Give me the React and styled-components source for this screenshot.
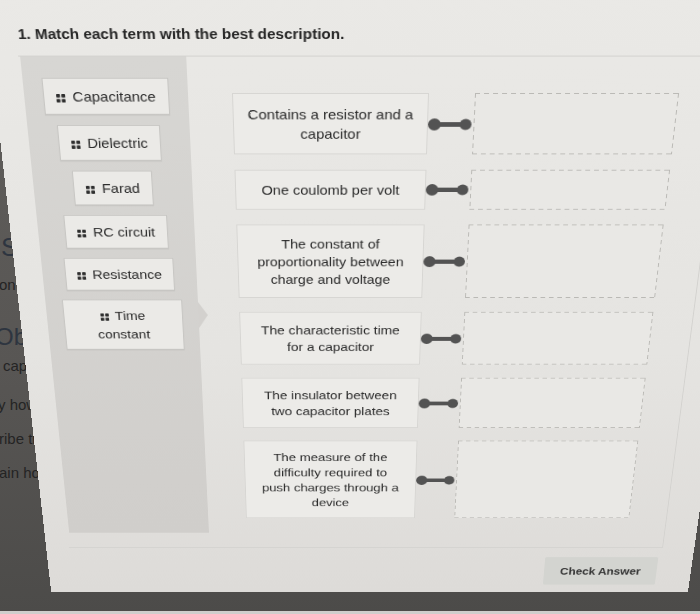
import React from "react";
import styled, { createGlobalStyle } from "styled-components";

const GlobalStyle = createGlobalStyle`
  html, body { margin: 0; padding: 0; background: #575553; overflow: hidden; }
  body { font-family: "Liberation Sans", Arial, Helvetica, sans-serif; }
  #root { width: 700px; height: 614px; }
`;

const Screen = styled.div`
  position: relative;
  width: 700px;
  height: 614px;
  overflow: hidden;
  display: flex;
  flex-direction: column;
  background: linear-gradient(180deg, #615f5c 0%, #585654 60%, #4c4b49 100%);
`;

const BehindPage = styled.div`
  flex: 1;
  display: flex;
  flex-direction: column;
  align-items: flex-start;
`;

const Fragment = styled.div`
  margin-top: ${(p) => p.$top}px;
  margin-left: ${(p) => p.$shift || 0}px;
  font-size: ${(p) => p.$size}px;
  line-height: ${(p) => p.$lh}px;
  color: ${(p) => (p.$heading ? "#2e3540" : "#242424")};
  white-space: nowrap;
`;

const Bezel = styled.div`
  height: 3px;
  background: #cfcecc;
`;

const Panel = styled.section`
  position: absolute;
  left: -5px;
  top: -20px;
  z-index: 1;
  width: 765px;
  box-sizing: border-box;
  padding: 42px 37px 11px 27px;
  background: linear-gradient(180deg, #eae9e6 0%, #e5e4e1 55%, #dddbd8 100%);
  transform-origin: 335px 114px;
  transform: perspective(1000px) rotateX(-18.6deg);
`;

const Title = styled.h1`
  margin: 0 0 12px 2px;
  font-size: 15px;
  line-height: 20px;
  font-weight: 700;
  color: #262626;
`;

const Question = styled.div`
  display: flex;
  border: 1px solid #d3d2cf;
  border-left: none;
  padding-bottom: 21px;
`;

const Pool = styled.div`
  position: relative;
  flex: none;
  width: 164px;
  margin-left: 2px;
  box-sizing: border-box;
  padding-top: 22px;
  display: flex;
  flex-direction: column;
  align-items: center;
  gap: 11px;
  background: linear-gradient(180deg, #d7d6d3 0%, #d0cecb 100%);

  &::after {
    content: "";
    position: absolute;
    top: 50%;
    right: -10px;
    margin-top: -16px;
    border-left: 10px solid #d3d1ce;
    border-top: 16px solid transparent;
    border-bottom: 16px solid transparent;
  }
`;

const Chip = styled.div`
  max-width: 129px;
  box-sizing: border-box;
  padding: 7px 12px;
  border: 1px solid #c8c7c4;
  background: #ebeae7;
  box-shadow: 0 1px 1px rgba(0, 0, 0, 0.06);
  font-size: 15px;
  line-height: 23px;
  color: #2b2b2b;
  text-align: center;
`;

const Handle = styled.svg`
  display: inline-block;
  width: 9px;
  height: 9px;
  margin-right: 7px;
  vertical-align: -0.5px;
`;

const Matches = styled.div`
  margin-left: 44px;
  padding: 38px 0 21px;
  display: flex;
  flex-direction: column;
  gap: 17px;
`;

const Row = styled.div`
  display: flex;
  align-items: stretch;
`;

const Description = styled.div`
  flex: none;
  width: 197px;
  box-sizing: border-box;
  padding: 11px 8px;
  border: 1px solid #d7d6d3;
  background: #ecebe8;
  display: flex;
  flex-direction: column;
  justify-content: center;
  align-items: center;
  font-size: 15px;
  line-height: 21px;
  color: #2b2b2b;
  text-align: center;
`;

const Line = styled.span`
  white-space: nowrap;
`;

const Link = styled.div`
  flex: none;
  width: 46px;
  display: flex;
  align-items: center;
`;

const DropZone = styled.div`
  flex: none;
  width: 204px;
  box-sizing: border-box;
  background:
    linear-gradient(to right, #bab9b5 55%, transparent 0) top left / 9px 1px repeat-x,
    linear-gradient(to right, #bab9b5 55%, transparent 0) bottom left / 9px 1px repeat-x,
    linear-gradient(to bottom, #bab9b5 55%, transparent 0) top left / 1px 9px repeat-y,
    linear-gradient(to bottom, #bab9b5 55%, transparent 0) top right / 1px 9px repeat-y,
    #e9e8e5;
`;

const Footer = styled.div`
  display: flex;
  justify-content: flex-end;
  padding: 14px 4px 0 0;
`;

const CheckButton = styled.button`
  height: 41px;
  padding: 0 19px;
  border: none;
  border-radius: 2px;
  background: #d3d4d0;
  color: #343434;
  font-family: "Liberation Sans", Arial, Helvetica, sans-serif;
  font-size: 14px;
  font-weight: 700;
  cursor: pointer;
`;

const terms = ["Capacitance", "Dielectric", "Farad", "RC circuit", "Resistance", "Time constant"];

const descriptions = [
  ["Contains a resistor and a", "capacitor"],
  ["One coulomb per volt"],
  ["The constant of", "proportionality between", "charge and voltage"],
  ["The characteristic time", "for a capacitor"],
  ["The insulator between", "two capacitor plates"],
  ["The measure of the", "difficulty required to", "push charges through a", "device"],
];

const fragments = [
  { text: "Se", size: 26, lh: 30, top: 232, heading: true, shift: 1 },
  { text: "on", size: 15, lh: 18, top: 14, shift: -1 },
  { text: "Obje", size: 24, lh: 28, top: 29, heading: true, shift: -5 },
  { text: "capa", size: 15, lh: 18, top: 6, shift: 3 },
  { text: "y how", size: 15, lh: 18, top: 21, shift: -2 },
  { text: "ribe the", size: 15, lh: 18, top: 16, shift: -1 },
  { text: "ain how", size: 15, lh: 18, top: 16, shift: -1 },
];

function DragHandle() {
  return (
    <Handle viewBox="0 0 9 9" aria-hidden="true">
      <rect x="0" y="0" width="3.8" height="3.8" rx="0.8" fill="#2e2e2e" />
      <rect x="5.2" y="0" width="3.8" height="3.8" rx="0.8" fill="#2e2e2e" />
      <rect x="0" y="5.2" width="3.8" height="3.8" rx="0.8" fill="#2e2e2e" />
      <rect x="5.2" y="5.2" width="3.8" height="3.8" rx="0.8" fill="#2e2e2e" />
    </Handle>
  );
}

function Connector() {
  return (
    <svg width="44" height="13" viewBox="0 0 44 13" aria-hidden="true">
      <rect x="6" y="4" width="32" height="5" fill="#535353" />
      <circle cx="6.5" cy="6.5" r="6.5" fill="#535353" />
      <circle cx="38" cy="6.5" r="6" fill="#535353" />
    </svg>
  );
}

export default function App() {
  return (
    <>
      <GlobalStyle />
      <Screen>
        <BehindPage>
          {fragments.map((f, i) => (
            <Fragment key={i} $size={f.size} $lh={f.lh} $top={f.top} $heading={f.heading} $shift={f.shift}>
              {f.text}
            </Fragment>
          ))}
        </BehindPage>
        <Bezel />
        <Panel>
          <Title>1. Match each term with the best description.</Title>
          <Question>
            <Pool>
              {terms.map((t) => (
                <Chip key={t}>
                  <DragHandle />
                  {t}
                </Chip>
              ))}
            </Pool>
            <Matches>
              {descriptions.map((lines, i) => (
                <Row key={i}>
                  <Description>
                    {lines.map((l) => (
                      <Line key={l}>{l}</Line>
                    ))}
                  </Description>
                  <Link>
                    <Connector />
                  </Link>
                  <DropZone />
                </Row>
              ))}
            </Matches>
          </Question>
          <Footer>
            <CheckButton type="button">Check Answer</CheckButton>
          </Footer>
        </Panel>
      </Screen>
    </>
  );
}
